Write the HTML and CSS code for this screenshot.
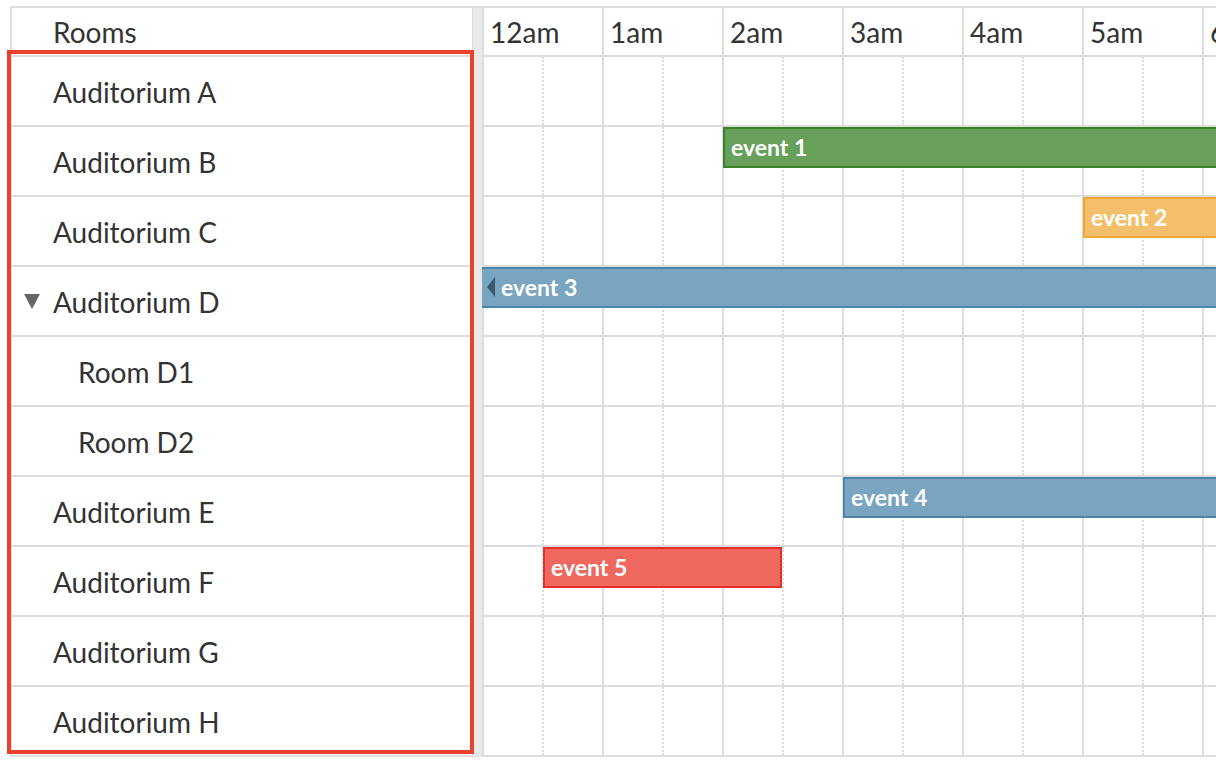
FILE: index.html
```html
<!DOCTYPE html>
<html>
<head>
<meta charset="utf-8">
<link rel="stylesheet" href="styles.css">
</head>
<body>
<div class="sched">
  <div class="res-col">
    <div class="res-head"><span class="res-label">Rooms</span></div>
    <div class="res-row"><span class="res-label">Auditorium A</span></div>
    <div class="res-row"><span class="res-label">Auditorium B</span></div>
    <div class="res-row"><span class="res-label">Auditorium C</span></div>
    <div class="res-row"><span class="expander"></span><span class="res-label">Auditorium D</span></div>
    <div class="res-row child"><span class="res-label">Room D1</span></div>
    <div class="res-row child"><span class="res-label">Room D2</span></div>
    <div class="res-row"><span class="res-label">Auditorium E</span></div>
    <div class="res-row"><span class="res-label">Auditorium F</span></div>
    <div class="res-row"><span class="res-label">Auditorium G</span></div>
    <div class="res-row"><span class="res-label">Auditorium H</span></div>
  </div>
  <div class="divider"></div>
  <div class="time-col">
    <div class="time-head">
      <div class="slot-label">12am</div>
      <div class="slot-label">1am</div>
      <div class="slot-label">2am</div>
      <div class="slot-label">3am</div>
      <div class="slot-label">4am</div>
      <div class="slot-label">5am</div>
      <div class="slot-label">6am</div>
    </div>
    <div class="time-row" id="r0"></div>
    <div class="time-row" id="r1"><div class="event green" style="left:241px;width:800px"><span class="ev-title">event 1</span></div></div>
    <div class="time-row" id="r2"><div class="event orange" style="left:601px;width:400px"><span class="ev-title">event 2</span></div></div>
    <div class="time-row" id="r3"><div class="event blue cont" style="left:0px;width:900px"><span class="arrow"></span><span class="ev-title">event 3</span></div></div>
    <div class="time-row" id="r4"></div>
    <div class="time-row" id="r5"></div>
    <div class="time-row" id="r6"><div class="event blue" style="left:361px;width:600px"><span class="ev-title">event 4</span></div></div>
    <div class="time-row" id="r7"><div class="event red" style="left:61px;width:239px"><span class="ev-title">event 5</span></div></div>
    <div class="time-row" id="r8"></div>
    <div class="time-row" id="r9"></div>
  </div>
</div>
<div class="highlight"></div>
<script>
  document.querySelectorAll('.time-row').forEach(function (row) {
    for (var i = 0; i < 7; i++) {
      var c = document.createElement('div');
      c.className = 'hour';
      c.innerHTML = '<div class="half"></div><div class="half2"></div>';
      row.insertBefore(c, row.firstChild);
    }
  });
</script>
</body>
</html>
```
FILE: styles.css
```css
html, body {
  margin: 0;
  padding: 0;
  background: #fff;
  overflow: hidden;
  width: 1216px;
  height: 760px;
}
body {
  font-family: Lato, "Open Sans", sans-serif;
  color: #333;
  font-size: 28px;
  position: relative;
}
.sched {
  display: flex;
  margin: 6px 0 0 10px;
  border-top: 2px solid #ddd;
  border-left: 2px solid #ddd;
  width: 1400px;
}
.res-col {
  width: 460px;
  flex: none;
}
.res-head {
  border-bottom: 2px solid #ddd;
  display: flex;
  align-items: center;
  padding-left: 41px;
  padding-top: 1px;
  height: 46px;
}
.res-row {
  border-bottom: 2px solid #ddd;
  display: flex;
  align-items: center;
  padding-left: 41px;
  padding-top: 1px;
  height: 67px;
  position: relative;
}
.res-row.child {
  padding-left: 66px;
}
.expander {
  position: absolute;
  left: 12px;
  top: 27px;
  width: 0;
  height: 0;
  border-left: 8px solid transparent;
  border-right: 8px solid transparent;
  border-top: 15px solid #666;
}
.divider {
  width: 9px;
  flex: none;
  background: #e9e9e9;
  border-left: 1px solid #dcdcdc;
}
.time-col {
  flex: 1;
}
.time-head {
  display: flex;
  height: 47px;
  border-bottom: 2px solid #ddd;
}
.slot-label {
  flex: none;
  border-left: 2px solid #ddd;
  padding-left: 6px;
  padding-top: 1px;
  box-sizing: border-box;
  width: 120px;
  display: flex;
  align-items: center;
}
.time-row {
  display: flex;
  height: 68px;
  border-bottom: 2px solid #ddd;
  position: relative;
}
.hour {
  width: 120px;
  flex: none;
  box-sizing: border-box;
  border-left: 2px solid #ddd;
  display: flex;
}
.half {
  width: 58px;
  border-right: 2px dotted #dcdcdc;
}
.half2 {
  flex: 1;
}
.event {
  position: absolute;
  top: 0;
  height: 41px;
  box-sizing: border-box;
  border: 2px solid;
  color: #fff;
  font-weight: 700;
  font-size: 23px;
  display: flex;
  align-items: center;
  padding-left: 6px;
  padding-bottom: 1px;
}
.event.green { background: #67a05a; border-color: #3b8128; }
.event.orange { background: #f4bf6b; border-color: #f0a733; }
.event.blue { background: #7aa5c1; border-color: #4c84aa; }
.event.red { background: #ee6860; border-color: #e5302a; }
.event.cont { border-left: none; padding-left: 5px; }
.arrow {
  width: 0;
  height: 0;
  border-top: 10px solid transparent;
  border-bottom: 10px solid transparent;
  border-right: 8px solid #3c5a6e;
  margin-right: 6px;
}
.highlight {
  position: absolute;
  left: 7px;
  top: 50px;
  width: 467px;
  height: 704px;
  box-sizing: border-box;
  border: 4px solid #e8412c;
}
```
